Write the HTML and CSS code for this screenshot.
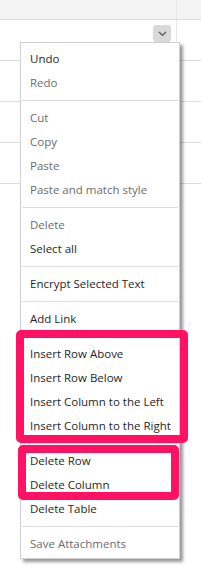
FILE: index.html
```html
<!DOCTYPE html>
<html lang="en">
<head>
    <meta charset="UTF-8">
    <meta name="viewport" content="width=device-width, initial-scale=1.0">
    <title>Table context menu</title>
    <link rel="stylesheet" href="styles.css">
</head>
<body>
    <div class="grid">
        <div class="grid-row grid-head">
            <div class="cell cell-main"></div>
            <div class="cell"></div>
        </div>
        <div class="grid-row">
            <div class="cell cell-main">
                <span class="drop-btn">
                    <svg width="9" height="6" viewBox="0 0 9 6"><path d="M1 1l3.5 3.5L8 1" fill="none" stroke="#555" stroke-width="1.2"/></svg>
                </span>
            </div>
            <div class="cell"></div>
        </div>
        <div class="grid-row">
            <div class="cell cell-main"></div>
            <div class="cell"></div>
        </div>
        <div class="grid-row">
            <div class="cell cell-main"></div>
            <div class="cell"></div>
        </div>
        <div class="grid-row">
            <div class="cell cell-main"></div>
            <div class="cell"></div>
        </div>
    </div>

    <div class="context-menu">
        <div class="menu-item">Undo</div>
        <div class="menu-item disabled">Redo</div>
        <div class="menu-sep"></div>
        <div class="menu-item disabled">Cut</div>
        <div class="menu-item disabled">Copy</div>
        <div class="menu-item disabled">Paste</div>
        <div class="menu-item disabled">Paste and match style</div>
        <div class="menu-sep"></div>
        <div class="menu-item disabled">Delete</div>
        <div class="menu-item">Select all</div>
        <div class="menu-sep"></div>
        <div class="menu-item">Encrypt Selected Text</div>
        <div class="menu-sep"></div>
        <div class="menu-item">Add Link</div>
        <div class="menu-sep"></div>
        <div class="menu-item">Insert Row Above</div>
        <div class="menu-item">Insert Row Below</div>
        <div class="menu-item">Insert Column to the Left</div>
        <div class="menu-item">Insert Column to the Right</div>
        <div class="menu-sep"></div>
        <div class="menu-item">Delete Row</div>
        <div class="menu-item">Delete Column</div>
        <div class="menu-item">Delete Table</div>
        <div class="menu-sep"></div>
        <div class="menu-item disabled">Save Attachments</div>
    </div>

    <div class="mark mark-insert"></div>
    <div class="mark mark-delete"></div>
</body>
</html>
```

FILE: styles.css
```css
body {
    margin: 0;
    background: #fff;
    font-family: "Open Sans", "Noto Sans", sans-serif;
}

.grid-row {
    display: flex;
    height: 40px;
    border-bottom: 1px solid #dcdcdc;
}

.grid-head {
    height: 19px;
    background: #f3f3f3;
}

.cell {
    flex: 1;
}

.cell-main {
    flex: 0 0 177px;
    border-right: 1px solid #e6e6e6;
    display: flex;
    justify-content: flex-end;
    align-items: flex-start;
    padding: 5px 5px 0 0;
    box-sizing: border-box;
}

.drop-btn {
    width: 18px;
    height: 17px;
    border-radius: 3px;
    background: #d9d9d9;
    display: flex;
    align-items: center;
    justify-content: center;
}

.context-menu {
    position: absolute;
    left: 20px;
    top: 42px;
    width: 158px;
    padding: 4px 0 2px;
    background: #fff;
    border: 1px solid #cfcfcf;
    box-shadow: 3px 3px 3px rgba(0, 0, 0, 0.4);
}

.menu-item {
    height: 24px;
    line-height: 24px;
    padding-left: 9px;
    font-size: 11.5px;
    color: #262626;
    white-space: nowrap;
}

.menu-item.disabled {
    color: #6b6b6b;
}

.menu-sep {
    height: 1px;
    margin: 5px 1px;
    background: #dcdcdc;
}

.mark {
    position: absolute;
    border: 8px solid #ff1163;
    border-radius: 5px;
    box-sizing: border-box;
}

.mark-insert {
    left: 16px;
    top: 330px;
    width: 172px;
    height: 113px;
}

.mark-delete {
    left: 18px;
    top: 445px;
    width: 161px;
    height: 55px;
}
```
